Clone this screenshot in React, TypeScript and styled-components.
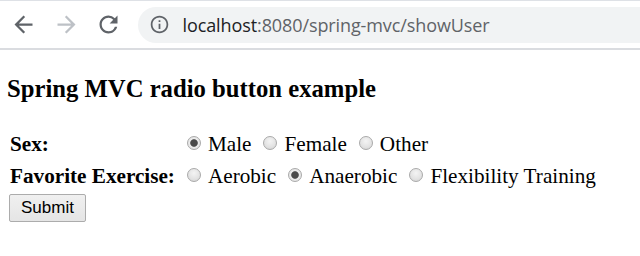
import React from 'react';
import styled, { createGlobalStyle } from 'styled-components';
import { MdArrowBack, MdArrowForward, MdRefresh, MdInfoOutline } from 'react-icons/md';

const GlobalStyle = createGlobalStyle`
    html, body {
        margin: 0;
        padding: 0;
        background: #ffffff;
    }
`;

const Chrome = styled.div`
    display: flex;
    align-items: center;
    height: 47px;
    border-top: 1px solid #dee1e6;
    border-bottom: 2px solid #dadce0;
    padding-left: 10px;
    overflow: hidden;
    background: #ffffff;
`;

const NavButton = styled.span<{ disabled?: boolean }>`
    display: flex;
    align-items: center;
    justify-content: center;
    width: 27px;
    height: 27px;
    margin-right: 15.5px;
    color: ${props => (props.disabled ? '#bdc1c6' : '#5f6368')};
    font-size: 27px;
    flex-shrink: 0;
`;

const Omnibox = styled.div`
    display: flex;
    align-items: center;
    flex: 1 0 auto;
    height: 36px;
    padding-left: 11px;
    border-radius: 18px 0 0 18px;
    background: #f1f3f4;
    margin-right: -20px;
`;

const InfoIcon = styled.span`
    display: flex;
    align-items: center;
    color: #5f6368;
    font-size: 21px;
    margin-right: 13px;
`;

const Url = styled.span`
    font-family: 'Open Sans', 'Noto Sans', sans-serif;
    font-size: 18px;
    letter-spacing: -0.1px;
    color: #5f6368;
    white-space: nowrap;
`;

const Host = styled.span`
    color: #202124;
`;

const Page = styled.div`
    padding: 0 7px;
    font-family: 'Liberation Serif', 'Times New Roman', serif;
    color: #000000;
`;

const Heading = styled.h3`
    margin: 25px 0 0 0;
    font-size: 24.7px;
    font-weight: 700;
    line-height: 27px;
`;

const Form = styled.form`
    display: grid;
    grid-template-columns: max-content 1fr;
    column-gap: 12px;
    row-gap: 4px;
    margin-top: 28px;
    padding-left: 3px;
    font-size: 21.2px;
`;

const Label = styled.label`
    display: flex;
    align-items: center;
    height: 28px;
    font-weight: 700;
    white-space: nowrap;
`;

const Options = styled.div`
    display: flex;
    align-items: center;
    height: 28px;
    gap: 12px;
    white-space: nowrap;
`;

const Option = styled.label`
    display: flex;
    align-items: center;
    gap: 7px;
`;

const Radio = styled.input.attrs({ type: 'radio' })`
    appearance: none;
    -webkit-appearance: none;
    margin: 0;
    width: 14px;
    height: 14px;
    border-radius: 50%;
    border: 1px solid #a9a9a9;
    background: radial-gradient(circle at 50% 35%, #f4f4f4 0%, #e2e2e2 60%, #d0d0d0 100%);
    position: relative;
    top: -1px;
    flex-shrink: 0;

    &:checked {
        background: radial-gradient(circle, #4a4a4a 0 3px, #6a6a6a 3.5px, #ececec 4.2px, #dcdcdc 100%);
    }
`;

const Submit = styled.button`
    grid-column: 1 / 2;
    justify-self: start;
    width: 77px;
    height: 28px;
    margin-left: -1px;
    padding: 0;
    border: 1px solid #acacac;
    border-radius: 2px;
    background: linear-gradient(#f0f0f0, #e5e5e5);
    font-family: 'Liberation Sans', Arial, sans-serif;
    font-size: 17px;
    color: #000000;
`;

const sexOptions = [
    { value: 'M', label: 'Male', checked: true },
    { value: 'F', label: 'Female' },
    { value: 'O', label: 'Other' },
];

const exerciseOptions = [
    { value: 'Aerobic', label: 'Aerobic' },
    { value: 'Anaerobic', label: 'Anaerobic', checked: true },
    { value: 'Flexibility', label: 'Flexibility Training' },
];

type Opt = { value: string; label: string; checked?: boolean };

const RadioGroup = ({ name, options }: { name: string; options: Opt[] }) => (
    <Options>
        {options.map(opt => (
            <Option key={opt.value}>
                <Radio name={name} value={opt.value} defaultChecked={opt.checked} />
                {opt.label}
            </Option>
        ))}
    </Options>
);

const App = () => (
    <>
        <GlobalStyle />
        <Chrome>
            <NavButton>
                <MdArrowBack />
            </NavButton>
            <NavButton disabled={true}>
                <MdArrowForward />
            </NavButton>
            <NavButton>
                <MdRefresh />
            </NavButton>
            <Omnibox>
                <InfoIcon>
                    <MdInfoOutline />
                </InfoIcon>
                <Url>
                    <Host>localhost</Host>:8080/spring-mvc/showUser
                </Url>
            </Omnibox>
        </Chrome>
        <Page>
            <Heading>Spring MVC radio button example</Heading>
            <Form onSubmit={e => e.preventDefault()}>
                <Label>Sex:</Label>
                <RadioGroup name="sex" options={sexOptions} />
                <Label>Favorite Exercise:</Label>
                <RadioGroup name="exercise" options={exerciseOptions} />
                <Submit type="submit">Submit</Submit>
            </Form>
        </Page>
    </>
);

export default App;
